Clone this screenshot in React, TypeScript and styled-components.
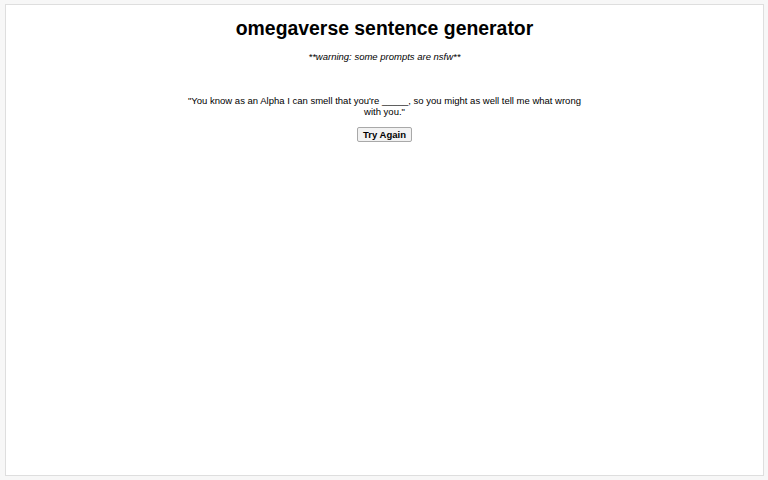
import styled, { createGlobalStyle } from 'styled-components';

const GlobalStyle = createGlobalStyle`
  html, body {
    margin: 0;
    padding: 0;
    background: #f7f7f7;
  }
  body {
    font-family: "Liberation Sans", Arial, sans-serif;
    color: #000;
  }
`;

const Page = styled.div`
  padding: 4px 4px 4px 5px;
  height: 480px;
  box-sizing: border-box;
`;

const Sheet = styled.main`
  height: 100%;
  box-sizing: border-box;
  background: #fff;
  border: 1px solid #dedede;
  display: flex;
  flex-direction: column;
  align-items: center;
  padding-top: 11px;
`;

const Title = styled.h1`
  margin: 0;
  font-size: 19.4px;
  font-weight: bold;
  line-height: 24px;
`;

const Warning = styled.p`
  margin: 11px 0 0;
  font-size: 9.5px;
  font-style: italic;
  line-height: 12px;
`;

const Prompt = styled.p`
  margin: 32px 0 0;
  width: 400px;
  text-align: center;
  font-size: 9.5px;
  line-height: 11px;
`;

const RetryButton = styled.button`
  margin-top: 10px;
  font-family: "Liberation Sans", Arial, sans-serif;
  font-size: 9.5px;
  font-weight: bold;
  padding: 1px 5px;
  height: 15px;
  line-height: 11px;
  background: #f2f2f2;
  border: 1px solid #a9a9a9;
  border-radius: 2px;
  color: #000;
`;

export default function App() {
  return (
    <>
      <GlobalStyle />
      <Page>
        <Sheet>
          <Title>omegaverse sentence generator</Title>
          <Warning>**warning: some prompts are nsfw**</Warning>
          <Prompt>
            "You know as an Alpha I can smell that you're _____, so you might as well tell me what wrong with you."
          </Prompt>
          <RetryButton>Try Again</RetryButton>
        </Sheet>
      </Page>
    </>
  );
}
